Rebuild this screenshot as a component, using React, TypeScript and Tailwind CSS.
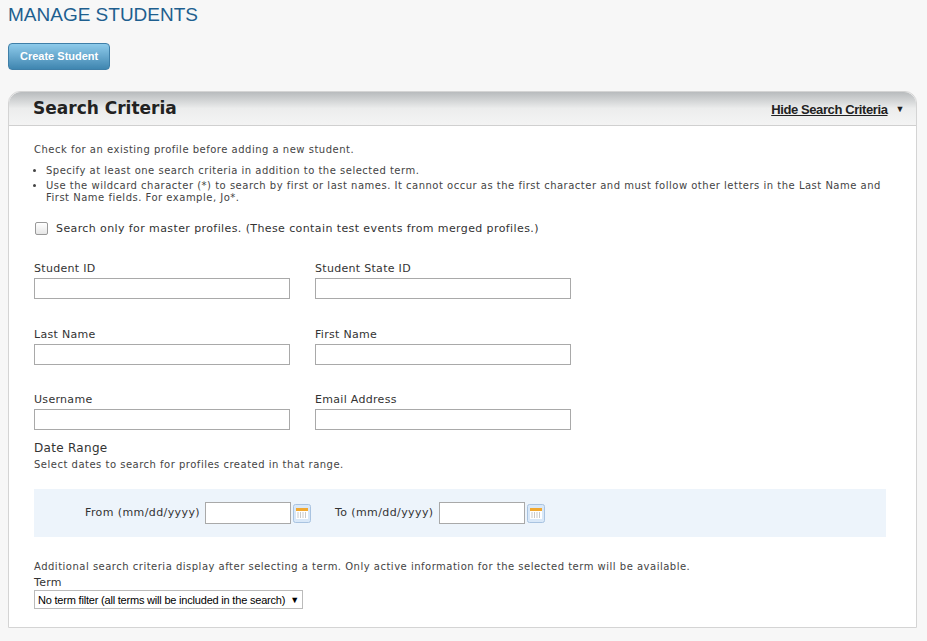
import React from "react";

const Cal = () => (
  <svg width="18" height="19" viewBox="0 0 18 19" className="ml-[2px]">
    <rect x="0.5" y="0.5" width="17" height="18" rx="2" fill="#d9e8f8" stroke="#a9c3e0" />
    <rect x="3" y="4" width="12" height="3" fill="#f0a830" />
    <rect x="3" y="7" width="12" height="8" fill="#fff" />
    <path d="M5 8v6M7.5 8v6M10 8v6M12.5 8v6" stroke="#c9c9c9" />
  </svg>
);

const Field = ({ label, top }: { label: string; top: string }) => (
  <div className="flex flex-col">
    <div className={`text-[11px] tracking-[0.3px] text-[#333] ${top}`}>{label}</div>
    <input className="mt-[3px] w-[256px] h-[21px] border border-[#a9a9a9] bg-white" />
  </div>
);

export default function App() {
  return (
    <div className="min-h-[641px] bg-[#f7f7f7] text-[#333]" style={{ fontFamily: "'DejaVu Sans', Verdana, sans-serif" }}>
      <div className="px-[8px] pt-[4px]">
        <h1 className="text-[19px] leading-[22px] text-[#1e5f8f]" style={{ fontFamily: "'Liberation Sans', Arial, sans-serif" }}>MANAGE STUDENTS</h1>
        <button className="mt-[17px] h-[27px] px-[11px] rounded-[4px] border border-[#3f7fa8] bg-gradient-to-b from-[#8ecbeb] to-[#3f86b0] text-white text-[11px] font-bold" style={{ fontFamily: "'Liberation Sans', Arial, sans-serif" }}>Create Student</button>
        <div className="mt-[21px] w-[909px] border border-[#d4d4d4] rounded-tl-[12px] rounded-tr-[12px] bg-white">
          <div className="h-[34px] rounded-tl-[12px] rounded-tr-[12px] bg-gradient-to-b from-[#b8bbbd] via-[#eceded] to-[#f4f4f4] border-b border-[#d0d0d0] flex items-end pb-[4px] justify-between pl-[24px] pr-[12px]">
            <div className="text-[17px] font-bold text-[#222]">Search Criteria</div>
            <div className="flex items-center gap-[8px] text-[12px] font-bold tracking-[-0.4px] text-[#222] pb-[2px]" style={{ fontFamily: "'Liberation Sans', Arial, sans-serif" }}>
              <span className="underline text-[13px]">Hide Search Criteria</span>
              <span className="text-[9px]">▼</span>
            </div>
          </div>
          <div className="pl-[25px] pr-[30px] pt-[18px] pb-[18px] text-[10px] leading-[12px] tracking-[0.5px] text-[#444]">
            <p>Check for an existing profile before adding a new student.</p>
            <ul className="list-disc pl-[12px] mt-[9px] space-y-[3px]">
              <li>Specify at least one search criteria in addition to the selected term.</li>
              <li>Use the wildcard character (*) to search by first or last names. It cannot occur as the first character and must follow other letters in the Last Name and First Name fields. For example, Jo*.</li>
            </ul>
            <label className="flex items-center gap-[8px] mt-[18px] text-[11px] tracking-[0.4px] text-[#333]">
              <span className="w-[13px] h-[13px] border border-[#999] rounded-[2px] bg-gradient-to-b from-white to-[#e6e6e6] ml-[1px]" />
              Search only for master profiles. (These contain test events from merged profiles.)
            </label>
            <div className="grid grid-cols-[281px_256px] mt-[15px]">
              <Field label="Student ID" top="mt-[13px]" />
              <Field label="Student State ID" top="mt-[13px]" />
              <Field label="Last Name" top="mt-[30px]" />
              <Field label="First Name" top="mt-[30px]" />
              <Field label="Username" top="mt-[29px]" />
              <Field label="Email Address" top="mt-[29px]" />
            </div>
            <div className="mt-[12px] text-[12px] tracking-[0.3px] text-[#333]">Date Range</div>
            <div className="mt-[5px]">Select dates to search for profiles created in that range.</div>
            <div className="mt-[18px] h-[48px] bg-[#edf4fb] flex items-center pl-[51px] text-[11px] tracking-[0.4px] text-[#333]">
              <span>From (mm/dd/yyyy)</span>
              <input className="ml-[5px] w-[86px] h-[22px] border border-[#a9a9a9] bg-white" />
              <Cal />
              <span className="ml-[24px]">To (mm/dd/yyyy)</span>
              <input className="ml-[5px] w-[86px] h-[22px] border border-[#a9a9a9] bg-white" />
              <Cal />
            </div>
            <div className="mt-[24px]">Additional search criteria display after selecting a term. Only active information for the selected term will be available.</div>
            <div className="mt-[4px] text-[11px] tracking-[0.3px] text-[#333]">Term</div>
            <div className="mt-[1px] inline-flex items-center h-[19px] border border-[#bbb] px-[3px] text-[11px] tracking-[-0.2px] text-black" style={{ fontFamily: "'Liberation Sans', Arial, sans-serif" }}>
              No term filter (all terms will be included in the search)<span className="ml-[5px] text-[9px]">▼</span>
            </div>
          </div>
        </div>
      </div>
    </div>
  );
}
